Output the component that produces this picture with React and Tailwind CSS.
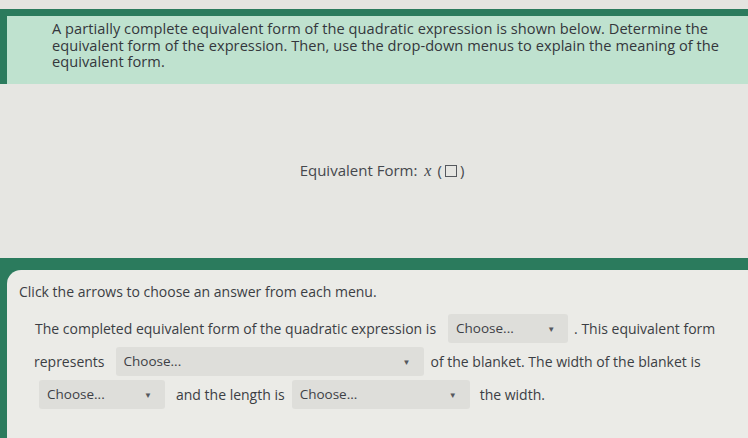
import React from 'react';

const font = { fontFamily: '"Open Sans", "Liberation Sans", sans-serif' };

function Select({ width }) {
  return (
    <span
      className={`inline-flex h-[29px] items-center justify-between rounded-[3px] bg-[#dededa] pl-[8px] pr-[13px] text-[13.5px] text-[#3d4046] ${width}`}
    >
      <span>Choose...</span>
      <span className="text-[8px] text-[#55585d]">▼</span>
    </span>
  );
}

export default function App() {
  return (
    <div className="w-[748px] h-[438px] overflow-hidden bg-[#e6e6e2] text-[#3b3e44]" style={font}>
      {/* top strip */}
      <div className="h-[9px] bg-[#e4e4e0]" />

      {/* question prompt */}
      <div className="bg-[#2b7b5d] pl-[7px] pt-[7px]">
        <div className="h-[68px] bg-[#bfe2cf] pl-[45px] pr-[10px] pt-[4px] text-[14.6px] leading-[16.5px] tracking-[0.05px] text-[#34373c]">
          A partially complete equivalent form of the quadratic expression is shown below. Determine the
          equivalent form of the expression. Then, use the drop-down menus to explain the meaning of the
          equivalent form.
        </div>
      </div>

      {/* equivalent form */}
      <div className="flex h-[174px] items-center justify-center pl-[16px] pb-[1px] text-[15px] text-[#45484d]">
        <span>Equivalent Form:</span>
        <span className="ml-[7px] italic text-[16px]" style={{ fontFamily: '"Liberation Serif", serif' }}>x</span>
        <span className="ml-[6px]">(</span>
        <span className="mx-[3px] inline-block h-[12px] w-[12px] border border-[#55585d]" />
        <span>)</span>
      </div>

      {/* answer card */}
      <div className="bg-[#2b7b5d] pt-[12px] pl-[7px]">
        <div className="h-[170px] rounded-tl-[14px] bg-[#ebebe7] pl-[12px] pt-[11px] text-[14px] text-[#3b3e44]">
          <p>Click the arrows to choose an answer from each menu.</p>

          <div className="mt-[12px] flex items-center pl-[16px]">
            <span>The completed equivalent form of the quadratic expression is</span>
            <span className="ml-[12px]"><Select width="w-[120px]" /></span>
            <span className="ml-[6px]">. This equivalent form</span>
          </div>

          <div className="mt-[4px] flex items-center pl-[15px]">
            <span>represents</span>
            <span className="ml-[11px]"><Select width="w-[308px]" /></span>
            <span className="ml-[7px]">of the blanket. The width of the blanket is</span>
          </div>

          <div className="mt-[4px] flex items-center pl-[20px]">
            <Select width="w-[126px]" />
            <span className="ml-[11px]">and the length is</span>
            <span className="ml-[7px]"><Select width="w-[178px]" /></span>
            <span className="ml-[10px]">the width.</span>
          </div>
        </div>
      </div>
    </div>
  );
}
